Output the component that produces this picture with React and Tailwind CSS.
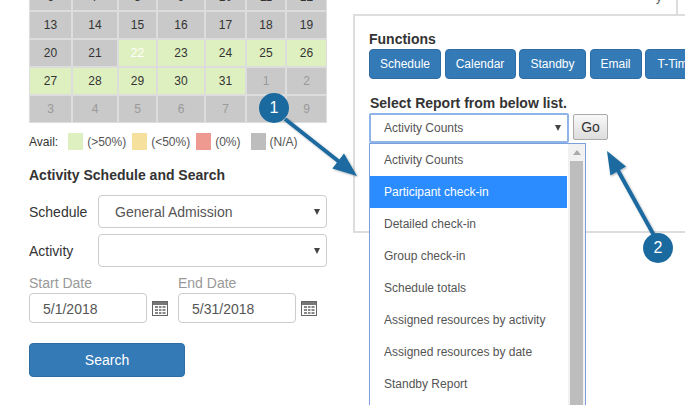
const calendar = [
  [
    ['6', 'gray'], ['7', 'gray'], ['8', 'gray'], ['9', 'gray'], ['10', 'gray'], ['11', 'gray'], ['12', 'gray'],
  ],
  [
    ['13', 'gray'], ['14', 'gray'], ['15', 'gray'], ['16', 'gray'], ['17', 'gray'], ['18', 'gray'], ['19', 'gray'],
  ],
  [
    ['20', 'gray'], ['21', 'gray'], ['22', 'today'], ['23', 'green'], ['24', 'green'], ['25', 'green'], ['26', 'green'],
  ],
  [
    ['27', 'green'], ['28', 'green'], ['29', 'green'], ['30', 'green'], ['31', 'green'], ['1', 'off'], ['2', 'off'],
  ],
  [
    ['3', 'off'], ['4', 'off'], ['5', 'off'], ['6', 'off'], ['7', 'off'], ['8', 'off'], ['9', 'off'],
  ],
];

const cellStyles = {
  gray: 'bg-[#c9c9c9] text-[#333]',
  green: 'bg-[#dff0c0] text-[#333]',
  today: 'bg-[#dff0c0] text-white',
  off: 'bg-[#c9c9c9] text-[#999]',
};

const reports = [
  'Activity Counts',
  'Participant check-in',
  'Detailed check-in',
  'Group check-in',
  'Schedule totals',
  'Assigned resources by activity',
  'Assigned resources by date',
  'Standby Report',
];

function Caret() {
  return <span className="w-0 h-0 border-x-[3.5px] border-x-transparent border-t-[6px] border-t-[#444]" />;
}

function Legend({ color, label, space }) {
  return (
    <div className={`flex items-center gap-[4px] ${space}`}>
      <span className={`w-[15px] h-[17px] ${color}`} />
      <span>{label}</span>
    </div>
  );
}

function SelectBox({ value }) {
  return (
    <div className="flex-1 h-[33px] flex items-center justify-between border border-[#ccc] rounded-[4px] pl-[16px] pr-[6px] text-[14px] text-[#555]">
      <span className="pt-[2px]">{value}</span>
      <Caret />
    </div>
  );
}

function CalendarIcon() {
  return (
    <svg width="16" height="15" viewBox="0 0 16 15" className="ml-[5px]">
      <rect x="0.5" y="0.5" width="15" height="14" fill="#fff" stroke="#666" />
      <rect x="1" y="1" width="14" height="3" fill="#777" />
      <path d="M3 5h3v2H3zM7 5h2.500v2H7zM10.500 5h3v2h-3zM3 8h3v2H3zM7 8h2.500v2H7zM10.500 8h3v2h-3zM3 11h3v2H3zM7 11h2.500v2H7zM10.500 11h3v2h-3z" fill="#888" />
    </svg>
  );
}

function DateField({ label, value }) {
  return (
    <div className="w-[149px]">
      <div className="text-[14px] leading-[16px] text-[#999] mb-[2px]">{label}</div>
      <div className="flex items-center">
        <div className="w-[118px] h-[30px] flex items-center border border-[#ccc] rounded-[4px] pl-[13px] pt-[2px] text-[14px] text-[#555]">{value}</div>
        <CalendarIcon />
      </div>
    </div>
  );
}

function FnButton({ label, width }) {
  return (
    <button className={`${width} shrink-0 h-[30px] bg-[#337ab7] border border-[#2e6da4] rounded-[4px] text-white text-[12px]`}>
      {label}
    </button>
  );
}

function Badge({ n }) {
  return (
    <div className="w-[30px] h-[30px] rounded-full bg-[#1a6a9f] text-white text-[16px] flex items-center justify-center">{n}</div>
  );
}

export default function App() {
  return (
    <div className="relative w-[685px] h-[405px] overflow-hidden bg-white flex text-[#333] font-['Liberation_Sans',Arial,sans-serif]">
      <div className="ml-[29px] w-[298px] shrink-0">
        <div className="mt-[-17px] bg-[#ddd] p-[1px] grid grid-cols-[41px_44px_37px_46px_39px_38px_39px] gap-[2px]">
          {calendar.flat().map(([day, kind], i) => (
            <div key={i} className={`h-[26px] flex items-center justify-center text-[12px] ${cellStyles[kind]}`}>{day}</div>
          ))}
        </div>

        <div className="flex items-center mt-[10px] h-[17px] text-[12px] text-[#555]">
          <span className="mr-[10px] text-[#333]">Avail:</span>
          <Legend color="bg-[#dff0c0]" label="(>50%)" space="mr-[6px]" />
          <Legend color="bg-[#f5e09d]" label="(<50%)" space="mr-[6px]" />
          <Legend color="bg-[#ee9a90]" label="(0%)" space="mr-[10px]" />
          <Legend color="bg-[#bdbdbd]" label="(N/A)" space="" />
        </div>

        <h3 className="mt-[17px] text-[14px] leading-[16px] font-bold">Activity Schedule and Search</h3>

        <div className="mt-[12px] flex items-center h-[33px] text-[14px]">
          <span className="w-[69px] shrink-0 pt-[2px]">Schedule</span>
          <SelectBox value="General Admission" />
        </div>
        <div className="mt-[6px] flex items-center h-[33px] text-[14px]">
          <span className="w-[69px] shrink-0 pt-[2px]">Activity</span>
          <SelectBox value="" />
        </div>

        <div className="mt-[8px] flex">
          <DateField label="Start Date" value="5/1/2018" />
          <DateField label="End Date" value="5/31/2018" />
        </div>

        <button className="mt-[20px] w-[156px] h-[34px] bg-[#337ab7] border border-[#2e6da4] rounded-[4px] text-white text-[14px]">Search</button>
      </div>

      <div className="ml-[26px] flex-1 min-w-0">
        <div className="w-[325px] h-[16px] border-r-2 border-[#ddd] overflow-hidden">
          <div className="mt-[-10px] pr-[14px] text-right text-[12px] leading-[14px] text-[#555]">y</div>
        </div>
        <div className="relative h-[219px] w-[340px] border-2 border-r-0 border-[#ddd] mt-[-2px] pl-[14px]">
          <div className="mt-[15px] text-[14px] leading-[16px] font-bold">Functions</div>
          <div className="mt-[2px] flex gap-[3.5px]">
            <FnButton label="Schedule" width="w-[72px]" />
            <FnButton label="Calendar" width="w-[71px]" />
            <FnButton label="Standby" width="w-[67px]" />
            <FnButton label="Email" width="w-[52px]" />
            <FnButton label="T-Time" width="w-[62px]" />
          </div>
          <div className="mt-[16px] ml-[1px] text-[14px] leading-[16px] font-bold">Select Report from below list.</div>
          <div className="mt-[2px] flex items-start">
            <div className="w-[200px] h-[30px] flex items-center justify-between border-2 border-[#8fb4e8] rounded-[2px] pl-[13px] pr-[6px] text-[12px] text-[#555]">
              <span>Activity Counts</span>
              <Caret />
            </div>
            <button className="ml-[4px] mt-[1px] w-[35px] h-[26px] border border-[#aaa] rounded-[2px] bg-gradient-to-b from-[#f8f8f8] to-[#ddd] text-[14px] text-[#333]">Go</button>
          </div>
          {/* dropdown list hangs over the panel edge */}
          <div className="absolute left-[14px] top-[127px] w-[217px] h-[280px] bg-white border border-[#7b9fdc] flex">
            <div className="w-[198px]">
              {reports.map((r, i) => (
                <div key={r} className={`h-[32px] flex items-center pl-[14px] text-[12px] ${i === 1 ? 'bg-[#2b8cff] text-white' : 'text-[#555]'}`}>{r}</div>
              ))}
            </div>
            <div className="w-[17px] ml-[1px] flex flex-col items-center bg-[#f1f1f1]">
              <div className="h-[17px] flex items-center justify-center">
                <span className="w-0 h-0 border-x-[4px] border-x-transparent border-b-[5px] border-b-[#aaa]" />
              </div>
              <div className="w-[13px] flex-1 bg-[#bdbdbd]" />
            </div>
          </div>
        </div>
      </div>

      {/* callout arrows */}
      <svg className="absolute left-0 top-0 pointer-events-none" width="685" height="405" viewBox="0 0 685 405">
        <defs>
          <filter id="shadow" x="-20%" y="-20%" width="140%" height="140%">
            <feDropShadow dx="1" dy="1" stdDeviation="1" floodColor="#000" floodOpacity="0.3" />
          </filter>
        </defs>
        <g filter="url(#shadow)" fill="#1a6a9f" stroke="none">
          <path d="M357 176L332.300 168.400L337 162.600L283.800 120.600L286.200 117.400L339.400 159.400L344 153.600Z" />
          <path d="M607 151L626 166.600L620 170L657.700 238L654.300 240L616.500 172L610.400 175.400Z" />
        </g>
      </svg>
      <div className="absolute left-[259px] top-[93px]"><Badge n="1" /></div>
      <div className="absolute left-[643px] top-[233px]"><Badge n="2" /></div>
    </div>
  );
}
